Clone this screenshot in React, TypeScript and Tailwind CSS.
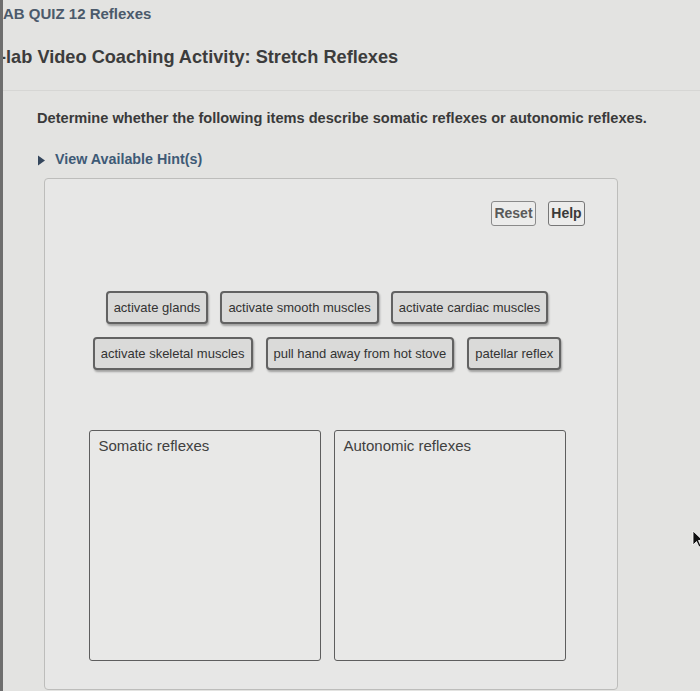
import React from "react";

const chipsRow1 = ["activate glands", "activate smooth muscles", "activate cardiac muscles"];
const chipsRow2 = ["activate skeletal muscles", "pull hand away from hot stove", "patellar reflex"];

function Chip({ label }: { label: string }) {
  return (
    <div className="h-[33px] px-[6px] flex items-center rounded-[4px] border-[2px] border-[#626262] bg-[#dadad9] text-[13px] text-[#333] shadow-[1px_2px_2px_rgba(0,0,0,0.3)] whitespace-nowrap">
      {label}
    </div>
  );
}

function DropBox({ label }: { label: string }) {
  return (
    <div className="w-[232px] h-[231px] rounded-[3px] border-[1.5px] border-[#5e5e5e] bg-[#e8e8e7] px-[9px] pt-[5px]">
      <div className="text-[15px] leading-[20px] text-[#404040]">{label}</div>
    </div>
  );
}

export default function App() {
  return (
    <div
      className="relative w-full h-[691px] overflow-hidden bg-[#e3e3e1] border-l-[3px] border-[#6e6e6e]"
      style={{ fontFamily: '"Liberation Sans", Arial, Helvetica, sans-serif' }}
    >
      <div className="pt-[4px] text-[15px] leading-[20px] font-bold text-[#4b5a6b]">AB QUIZ 12 Reflexes</div>
      <div className="mt-[21px] -ml-[3px] text-[18.2px] leading-[24px] font-bold text-[#3c3c3c]">
        -lab Video Coaching Activity: Stretch Reflexes
      </div>
      <div className="mt-[21px] h-px bg-[#d6d6d4]" />
      <div className="pl-[34px]">
        <div className="mt-[17px] text-[14.6px] leading-[20px] font-bold text-[#3a3a3a]">
          Determine whether the following items describe somatic reflexes or autonomic reflexes.
        </div>
        <div className="mt-[22px] flex items-center h-[20px] text-[14.3px] font-bold text-[#3e5a76]">
          <svg width="9" height="11" viewBox="0 0 9 11" className="mr-[9px]">
            <path d="M1 0.5 L8 5.5 L1 10.5 Z" fill="#34465c" />
          </svg>
          View Available Hint(s)
        </div>
        <div className="mt-[8px] ml-[7px] w-[574px] h-[512px] rounded-[4px] border border-[#bdbdbb] bg-[#e7e7e6] flex flex-col">
          <div className="pt-[22px] pr-[32px] flex justify-end gap-[12px]">
            <div className="h-[25px] w-[45px] flex items-center justify-center rounded-[3px] border-[1.5px] border-[#8a8a8a] bg-[#ececeb] text-[14px] font-bold text-[#5a5a5a]">
              Reset
            </div>
            <div className="h-[25px] w-[37px] flex items-center justify-center rounded-[3px] border-[1.5px] border-[#777] bg-[#ececeb] text-[14px] font-bold text-[#3a3a3a]">
              Help
            </div>
          </div>
          <div className="mt-[65px] pr-[8px] flex flex-col items-center gap-[13px]">
            <div className="flex gap-[12px]">
              {chipsRow1.map((c) => (
                <Chip key={c} label={c} />
              ))}
            </div>
            <div className="flex gap-[13px]">
              {chipsRow2.map((c) => (
                <Chip key={c} label={c} />
              ))}
            </div>
          </div>
          <div className="mt-[60px] pr-[8px] flex justify-center gap-[13px]">
            <DropBox label="Somatic reflexes" />
            <DropBox label="Autonomic reflexes" />
          </div>
        </div>
      </div>
      <svg width="10" height="18" viewBox="0 0 10 18" className="absolute right-[-2px] top-[530px]">
        <path d="M1 1 L1 15 L4.5 11.5 L7 17 L9 16 L6.5 10.5 L11 10.5 Z" fill="#111" stroke="#fff" strokeWidth="0.8" />
      </svg>
    </div>
  );
}
